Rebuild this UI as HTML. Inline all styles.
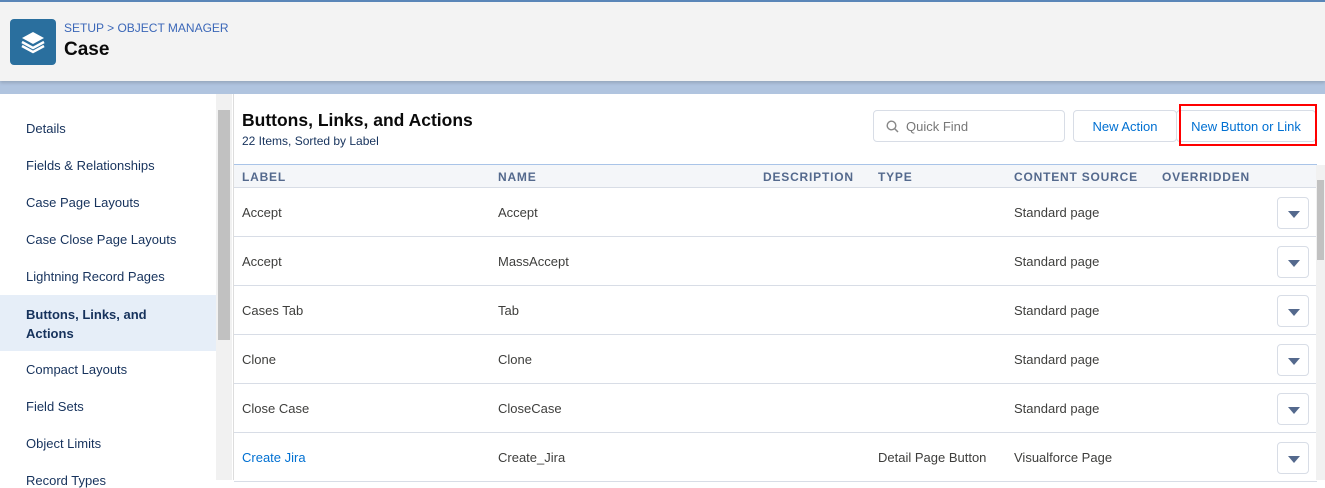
<!DOCTYPE html><html><head><style>
*{margin:0;padding:0;box-sizing:border-box}
body{width:1325px;height:480px;overflow:hidden;font-family:"Liberation Sans",sans-serif;font-size:13px;color:#16325c;background:#fff;position:relative}
.hdr{position:absolute;left:0;top:0;width:1325px;height:81px;background:#f3f3f3;border-top:2px solid #5a86b8;box-shadow:0 2px 3px rgba(0,0,0,.15);z-index:2}
.stripe{position:absolute;left:0;top:81px;width:1325px;height:13px;background:#b0c4df}
.icon{position:absolute;left:10px;top:17px;width:46px;height:46px;background:#2a6f9e;border-radius:4px}
.bc{position:absolute;left:64px;top:19px;font-size:12px;color:#3b67b8}
.title{position:absolute;left:64px;top:37px;font-size:19px;font-weight:bold;color:#0a0a0a}
.nav{position:absolute;left:0;top:94px;width:216px;height:386px;background:#fff}
.nav div{position:absolute;left:26px;font-size:13px;color:#16325c}
.sb{position:absolute;left:216px;top:94px;width:16px;height:386px;background:#f1f1f1}
.sb i{position:absolute;left:2px;top:16px;width:12px;height:230px;background:#c1c1c1}
.main{position:absolute;left:233px;top:94px;width:1083px;height:386px;background:#fff;border-left:1px solid #ddd}
.h1{position:absolute;left:8px;top:16px;font-size:17.5px;font-weight:bold;color:#0a0a0a}
.sub{position:absolute;left:8px;top:40px;font-size:12px;color:#16325c}
.qf{position:absolute;left:639px;top:16px;width:192px;height:32px;border:1px solid #d8dde6;border-radius:4px;color:#777;font-size:13px;padding:8px 0 0 32px}
.btn{position:absolute;top:16px;height:32px;border:1px solid #d8dde6;border-radius:4px;color:#0070d2;font-size:13px;padding-top:8px;text-align:center}
.red{position:absolute;left:945px;top:10px;width:138px;height:42px;border:2px solid #f00}
.th{position:absolute;left:0;top:70px;width:1083px;height:24px;background:#f4f6f9;border-top:1px solid #a9c4e8;border-bottom:1px solid #d8dde6}
.th span{position:absolute;top:5px;font-size:12px;letter-spacing:.8px;color:#54698d;font-weight:bold}
.row{position:absolute;left:0;width:1083px;height:49px;border-bottom:1px solid #d8dde6}
.row span{position:absolute;top:17px;font-size:13px;color:#3e3e3c}
.dd{position:absolute;left:1043px;top:9px;width:32px;height:32px;border:1px solid #d8dde6;border-radius:4px}
.dd:after{content:"";position:absolute;left:10px;top:13px;border-left:6px solid transparent;border-right:6px solid transparent;border-top:7px solid #54698d}
.rsb{position:absolute;left:1316px;top:165px;width:9px;height:315px;background:#f1f1f1}
.rsb i{position:absolute;left:1px;top:15px;width:7px;height:80px;background:#c1c1c1}
</style></head><body>
<div class="hdr"><div class="icon"><svg width="46" height="46" viewBox="0 0 46 46"><path d="M23 13l11 6-11 6-11-6z" fill="#fff"/><path d="M12 23l11 6 11-6M12 27l11 6 11-6" stroke="#fff" stroke-width="2.5" fill="none"/></svg></div>
<div class="bc">SETUP &gt; OBJECT MANAGER</div><div class="title">Case</div></div>
<div class="stripe"></div>
<div class="nav">
<div style="top:27px">Details</div><div style="top:64px">Fields &amp; Relationships</div><div style="top:101px">Case Page Layouts</div><div style="top:138px">Case Close Page Layouts</div><div style="top:175px">Lightning Record Pages</div>
<div style="left:0;top:201px;width:216px;height:56px;background:#e6eef8"></div>
<div style="top:211px;font-weight:bold;line-height:19px">Buttons, Links, and<br>Actions</div>
<div style="top:268px">Compact Layouts</div><div style="top:305px">Field Sets</div><div style="top:342px">Object Limits</div><div style="top:379px">Record Types</div>
</div>
<div class="sb"><i></i></div>
<div class="main">
<div class="h1">Buttons, Links, and Actions</div><div class="sub">22 Items, Sorted by Label</div>
<div class="qf"><svg style="position:absolute;left:12px;top:9px" width="13" height="13" viewBox="0 0 13 13"><circle cx="5.5" cy="5.5" r="4.3" stroke="#888" stroke-width="1.4" fill="none"/><path d="M8.5 8.5l3.5 3.5" stroke="#888" stroke-width="1.5"/></svg>Quick Find</div>
<div class="btn" style="left:839px;width:104px">New Action</div>
<div class="btn" style="left:942px;width:140px">New Button or Link</div>
<div class="red"></div>
<div class="th"><span style="left:8px">LABEL</span><span style="left:264px">NAME</span><span style="left:529px">DESCRIPTION</span><span style="left:644px">TYPE</span><span style="left:780px">CONTENT SOURCE</span><span style="left:928px">OVERRIDDEN</span></div>
<div class="row" style="top:94px"><span style="left:8px">Accept</span><span style="left:264px">Accept</span><span style="left:780px">Standard page</span><div class="dd"></div></div>
<div class="row" style="top:143px"><span style="left:8px">Accept</span><span style="left:264px">MassAccept</span><span style="left:780px">Standard page</span><div class="dd"></div></div>
<div class="row" style="top:192px"><span style="left:8px">Cases Tab</span><span style="left:264px">Tab</span><span style="left:780px">Standard page</span><div class="dd"></div></div>
<div class="row" style="top:241px"><span style="left:8px">Clone</span><span style="left:264px">Clone</span><span style="left:780px">Standard page</span><div class="dd"></div></div>
<div class="row" style="top:290px"><span style="left:8px">Close Case</span><span style="left:264px">CloseCase</span><span style="left:780px">Standard page</span><div class="dd"></div></div>
<div class="row" style="top:339px"><span style="left:8px;color:#0070d2">Create Jira</span><span style="left:264px">Create_Jira</span><span style="left:644px">Detail Page Button</span><span style="left:780px">Visualforce Page</span><div class="dd"></div></div>
</div>
<div class="rsb"><i></i></div>
</body></html>
